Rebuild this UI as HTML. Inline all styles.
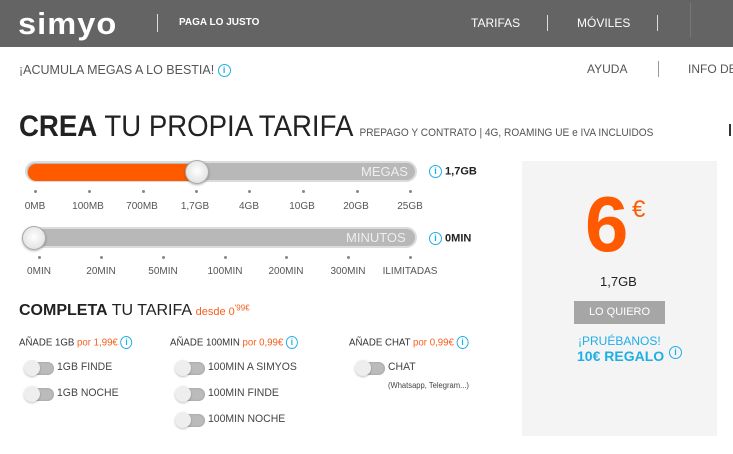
<!DOCTYPE html>
<html><head><meta charset="utf-8"><style>
*{margin:0;padding:0;box-sizing:border-box}
body{width:733px;height:454px;overflow:hidden;background:#fff;font-family:"Liberation Sans",sans-serif;color:#333;position:relative}
.a{position:absolute;white-space:nowrap}
.hdr{position:absolute;left:0;top:0;width:733px;height:47px;background:#646464}
.track{position:absolute;height:21px;border-radius:11px;background:#b8b8b8;border:2px solid #dcdcdc}
.knob{position:absolute;width:24px;height:24px;border-radius:50%;background:radial-gradient(circle at 50% 45%,#fff,#e4e4e4 70%,#c8c8c8);border:1px solid #aaa;box-shadow:0 1px 2px rgba(0,0,0,.3)}
.dot{position:absolute;width:3px;height:3px;border-radius:50%;background:#888}
.lbl{position:absolute;font-size:10px;color:#555;transform:translateX(-50%)}
.info{display:inline-block;width:13px;height:13px;border:1.3px solid #1eaee8;border-radius:50%;color:#1eaee8;font-size:9px;line-height:10px;text-align:center;font-weight:bold;vertical-align:middle}
.tog{position:absolute;width:28px;height:13px;border-radius:7px;background:#bbb;box-shadow:inset 0 0 2px #999}
.tog:before{content:"";position:absolute;left:-2px;top:-2px;width:16px;height:16px;border-radius:50%;background:#eee;box-shadow:0 1px 2px rgba(0,0,0,.25)}
.opt{position:absolute;font-size:11px;color:#444;transform:scaleX(.95);transform-origin:left}
.or{color:#f5601e}
.n{transform:scaleX(.92);transform-origin:left}
</style></head><body>
<div class="hdr"></div>
<div class="a" style="left:18px;top:6px;font-size:31px;font-weight:bold;color:#fff;letter-spacing:1px;transform:scaleX(1.05);transform-origin:left">simyo</div>
<div class="a" style="left:157px;top:14px;width:1px;height:18px;background:#ddd"></div>
<div class="a" style="left:179px;top:17px;font-size:10px;color:#fff;font-weight:bold">PAGA LO JUSTO</div>
<div class="a" style="left:471px;top:16px;font-size:12px;color:#fff">TARIFAS</div>
<div class="a" style="left:547px;top:15px;width:1px;height:16px;background:#ddd"></div>
<div class="a" style="left:577px;top:16px;font-size:12px;color:#fff">MÓVILES</div>
<div class="a" style="left:657px;top:15px;width:1px;height:16px;background:#ddd"></div>
<div class="a" style="left:690px;top:3px;width:1px;height:34px;background:#777"></div>

<div class="a" style="left:19px;top:63px;font-size:12.5px;color:#555">¡ACUMULA MEGAS A LO BESTIA! <span class="info">i</span></div>
<div class="a" style="left:587px;top:62px;font-size:12px;color:#555">AYUDA</div>
<div class="a" style="left:658px;top:61px;width:1px;height:16px;background:#999"></div>
<div class="a" style="left:688px;top:62px;font-size:12px;color:#555">INFO DE</div>

<div class="a n" style="left:19px;top:110px;font-size:30px;color:#222"><b>CREA</b> TU PROPIA TARIFA <span style="font-size:11px;color:#555">PREPAGO Y CONTRATO | 4G, ROAMING UE e IVA INCLUIDOS</span></div>
<div class="a" style="left:729px;top:124px;width:2px;height:12px;background:#333"></div>

<div class="track" style="left:25px;top:161px;width:392px"></div>
<div class="a" style="left:28px;top:164px;width:172px;height:17px;background:#ff5a00;border-radius:8px 0 0 8px"></div>
<div class="a" style="left:361px;top:164px;font-size:13px;color:#eee">MEGAS</div>
<div class="knob" style="left:185px;top:160px"></div>
<div class="a" style="left:429px;top:165px;font-size:11px;font-weight:bold;color:#222"><span class="info">i</span> 1,7GB</div>

<div class="track" style="left:22px;top:227px;width:395px"></div>
<div class="a" style="left:346px;top:230px;font-size:13px;color:#eee">MINUTOS</div>
<div class="knob" style="left:22px;top:226px"></div>
<div class="a" style="left:429px;top:232px;font-size:11px;font-weight:bold;color:#222"><span class="info">i</span> 0MIN</div>

<div class="dot" style="left:34px;top:190px"></div><div class="dot" style="left:88px;top:190px"></div><div class="dot" style="left:142px;top:190px"></div><div class="dot" style="left:195px;top:190px"></div><div class="dot" style="left:248px;top:190px"></div><div class="dot" style="left:302px;top:190px"></div><div class="dot" style="left:356px;top:190px"></div><div class="dot" style="left:409px;top:190px"></div>
<div class="lbl" style="left:35px;top:201px">0MB</div><div class="lbl" style="left:88px;top:201px">100MB</div><div class="lbl" style="left:142px;top:201px">700MB</div><div class="lbl" style="left:195px;top:201px">1,7GB</div><div class="lbl" style="left:249px;top:201px">4GB</div><div class="lbl" style="left:302px;top:201px">10GB</div><div class="lbl" style="left:356px;top:201px">20GB</div><div class="lbl" style="left:410px;top:201px">25GB</div>

<div class="dot" style="left:38px;top:256px"></div><div class="dot" style="left:100px;top:256px"></div><div class="dot" style="left:162px;top:256px"></div><div class="dot" style="left:224px;top:256px"></div><div class="dot" style="left:285px;top:256px"></div><div class="dot" style="left:347px;top:256px"></div><div class="dot" style="left:409px;top:256px"></div>
<div class="lbl" style="left:39px;top:266px">0MIN</div><div class="lbl" style="left:101px;top:266px">20MIN</div><div class="lbl" style="left:163px;top:266px">50MIN</div><div class="lbl" style="left:225px;top:266px">100MIN</div><div class="lbl" style="left:286px;top:266px">200MIN</div><div class="lbl" style="left:348px;top:266px">300MIN</div><div class="lbl" style="left:410px;top:266px">ILIMITADAS</div>

<div class="a" style="left:19px;top:302px;font-size:16px;color:#222"><b>COMPLETA</b> TU TARIFA <span class="or" style="font-size:11px">desde 0<sup style="font-size:8px">'99€</sup></span></div>

<div class="a n" style="left:19px;top:336px;font-size:10.5px;color:#333">AÑADE 1GB <span class="or">por 1,99€</span> <span class="info">i</span></div>
<div class="a n" style="left:170px;top:336px;font-size:10.5px;color:#333">AÑADE 100MIN <span class="or">por 0,99€</span> <span class="info">i</span></div>
<div class="a n" style="left:349px;top:336px;font-size:10.5px;color:#333">AÑADE CHAT <span class="or">por 0,99€</span> <span class="info">i</span></div>

<div class="tog" style="left:26px;top:362px"></div><div class="opt" style="left:57px;top:361px">1GB FINDE</div>
<div class="tog" style="left:26px;top:388px"></div><div class="opt" style="left:57px;top:387px">1GB NOCHE</div>
<div class="tog" style="left:177px;top:362px"></div><div class="opt" style="left:208px;top:361px">100MIN A SIMYOS</div>
<div class="tog" style="left:177px;top:388px"></div><div class="opt" style="left:208px;top:387px">100MIN FINDE</div>
<div class="tog" style="left:177px;top:414px"></div><div class="opt" style="left:208px;top:413px">100MIN NOCHE</div>
<div class="tog" style="left:357px;top:362px"></div><div class="opt" style="left:388px;top:361px">CHAT</div>
<div class="opt" style="left:388px;top:381px;font-size:8px">(Whatsapp, Telegram...)</div>

<div class="a" style="left:522px;top:161px;width:195px;height:275px;background:#f4f4f4"></div>
<div class="a" style="left:585px;top:181px;font-size:78px;font-weight:bold;color:#ff5a00;line-height:86px">6</div>
<div class="a" style="left:632px;top:196px;font-size:24px;color:#ff5a00">€</div>
<div class="a" style="left:600px;top:274px;font-size:13px;color:#222">1,7GB</div>
<div class="a" style="left:574px;top:301px;width:91px;height:23px;background:#a6a6a6;color:#fff;font-size:11px;text-align:center;line-height:23px">LO QUIERO</div>
<div class="a" style="left:578px;top:334px;font-size:12px;color:#1eaee8;text-align:center">¡PRUÉBANOS!</div>
<div class="a" style="left:577px;top:348px;font-size:14px;color:#1eaee8;font-weight:bold">10€ REGALO</div>
<div class="a" style="left:669px;top:344px"><span class="info">i</span></div>
</body></html>
